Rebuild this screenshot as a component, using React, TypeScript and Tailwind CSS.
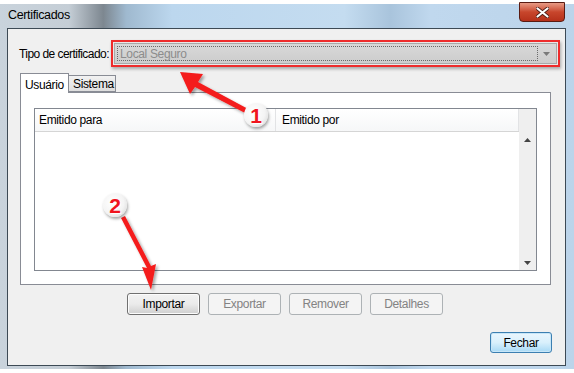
import React from "react";

const font = "font-['Liberation_Sans',Arial,sans-serif] tracking-[-0.35px]";

function Btn({ label, disabled, primary }: { label: string; disabled?: boolean; primary?: boolean }) {
  if (primary) {
    return (
      <div className="w-[62px] h-[21px] rounded-[3px] border border-[#3c7fb1] bg-gradient-to-b from-[#eaf6fd] via-[#d9f0fc] to-[#a7d9f5] flex items-center justify-center text-[#000] shadow-[inset_0_0_0_1px_#c7e6f8]">
        {label}
      </div>
    );
  }
  if (disabled) {
    return (
      <div className="w-[73px] h-[22px] rounded-[3px] border border-[#adb2b5] bg-[#f4f4f4] flex items-center justify-center text-[#838383]">
        {label}
      </div>
    );
  }
  return (
    <div className="w-[73px] h-[22px] rounded-[3px] border border-[#707070] bg-gradient-to-b from-[#f2f2f2] via-[#ebebeb] to-[#cfcfcf] flex items-center justify-center text-black shadow-[inset_0_0_0_1px_#fcfcfc]">
      {label}
    </div>
  );
}

function Badge({ n }: { n: string }) {
  return (
    <div className="w-[24px] h-[24px] rounded-full bg-[radial-gradient(circle_at_40%_40%,#ffffff_0%,#f4f4f4_55%,#cfcfcf_100%)] shadow-[1px_2px_3px_rgba(0,0,0,0.35)] flex items-center justify-center">
      <span className="text-[#f0141e] font-bold text-[21px] leading-none font-['Liberation_Sans',sans-serif] [text-shadow:1px_1px_0_#fff]">{n}</span>
    </div>
  );
}

export default function App() {
  return (
    <div className={`relative w-[574px] h-[373px] bg-white overflow-hidden text-[12px] text-black ${font}`}>
      <div className="mt-[4px] h-[365px] w-full bg-[linear-gradient(90deg,#c9d3dc_0%,#c5ced6_12%,#7d8790_18%,#9fb9cf_22%,#bcd7ee_30%,#c4dcf0_60%,#a9c4dc_68%,#c0d8ee_75%,#bcd4ea_100%)] flex flex-col">
        <div className="h-[24px] flex items-center justify-between pl-[8px] pr-[9px]">
          <span className="text-[12.5px] text-black mt-[-1px]">Certificados</span>
          <div className="mt-[-8px] w-[46px] h-[20px] rounded-b-[4px] border border-[#5a1b12] bg-gradient-to-b from-[#e79a85] via-[#c8462c] to-[#b5301a] flex items-center justify-center">
            <svg width="13" height="11" viewBox="0 0 13 11">
              <path d="M1.5 1.5 L11.5 9.5 M11.5 1.5 L1.5 9.5" stroke="#4a1a12" strokeWidth="3.6" strokeLinecap="round" />
              <path d="M1.5 1.5 L11.5 9.5 M11.5 1.5 L1.5 9.5" stroke="#fff" strokeWidth="2.2" strokeLinecap="round" />
            </svg>
          </div>
        </div>
        <div className="ml-[7px] mr-[8px] h-[338px] border border-[#3d4a55] bg-[#f0f0f0] flex flex-col">
          <div className="flex items-center mt-[11px] pl-[11px]">
            <span className="w-[92px] whitespace-nowrap tracking-[-0.55px]">Tipo de certificado:</span>
            <div className="w-[449px] h-[27px] border-2 border-[#ee2c2c] shadow-[1px_2px_3px_rgba(0,0,0,0.3)] p-[1px] bg-[#e8e8e8]">
              <div className="h-full border border-[#a9a9a9] bg-gradient-to-b from-[#d8d8d8] to-[#cdcdcd] p-[2px] flex">
                <div className="flex-1 border border-dotted border-[#6b6b6b] flex items-center pl-[2px] text-[#8c8c8c]">
                  Local Seguro
                </div>
                <div className="w-[16px] flex items-center justify-center">
                  <svg width="7" height="4" viewBox="0 0 7 4"><path d="M0 0 H7 L3.5 4 Z" fill="#7a7a7a" /></svg>
                </div>
              </div>
            </div>
          </div>

          <div className="flex items-end ml-[12px] mt-[6px] h-[19px]">
            <div className="h-[20px] w-[49px] border border-b-0 border-[#898c95] bg-white flex items-start pl-[4px] pt-[2px] relative z-10 mb-[-1px]">Usuário</div>
            <div className="h-[17px] w-[47px] border border-l-0 border-[#898c95] bg-gradient-to-b from-[#f2f2f2] to-[#dedede] flex items-center pl-[4px]">Sistema</div>
          </div>

          <div className="ml-[12px] mr-[14px] h-[193px] border border-[#898c95] bg-white pt-[15px] px-[13px] pb-[13px]">
            <div className="h-full border border-[#828790] flex">
              <div className="flex-1 flex flex-col">
                <div className="h-[23px] flex bg-gradient-to-b from-white to-[#f6f7f8] border-b border-[#d5d5d5]">
                  <div className="w-[241px] border-r border-[#e2e3e5] flex items-center pl-[4px]">Emitido para</div>
                  <div className="flex-1 border-r border-[#e2e3e5] flex items-center pl-[6px]">Emitido por</div>
                </div>
                <div className="flex-1 bg-white" />
              </div>
              <div className="w-[17px] bg-[#efefef] flex flex-col items-center justify-between pt-[29px] pb-[5px]">
                <svg width="7" height="4" viewBox="0 0 7 4"><path d="M3.5 0 L7 4 H0 Z" fill="#444" /></svg>
                <svg width="7" height="4" viewBox="0 0 7 4"><path d="M0 0 H7 L3.5 4 Z" fill="#444" /></svg>
              </div>
            </div>
          </div>

          <div className="flex gap-[8px] ml-[119px] mt-[8px]">
            <Btn label="Importar" />
            <Btn label="Exportar" disabled />
            <Btn label="Remover" disabled />
            <Btn label="Detalhes" disabled />
          </div>

          <div className="flex justify-end pr-[13px] mt-[17px]">
            <Btn label="Fechar" primary />
          </div>
        </div>
      </div>

      <svg className="absolute left-0 top-0 pointer-events-none" width="574" height="373">
        <defs>
          <filter id="sh" x="-20%" y="-20%" width="140%" height="140%">
            <feDropShadow dx="2" dy="2" stdDeviation="1.5" floodColor="#000" floodOpacity="0.35" />
          </filter>
        </defs>
        <g filter="url(#sh)" fill="#f41c1c">
          <path d="M180 72 L203 74 L198 82 L250 110 L247 114 L195 87 L190 94 Z" />
          <path d="M151 290 L142 267 L147 268 L121 218 L125 216 L151 266 L156 264 Z" />
        </g>
      </svg>
      <div className="absolute left-[244px] top-[103px]"><Badge n="1" /></div>
      <div className="absolute left-[103px] top-[193px]"><Badge n="2" /></div>
    </div>
  );
}
